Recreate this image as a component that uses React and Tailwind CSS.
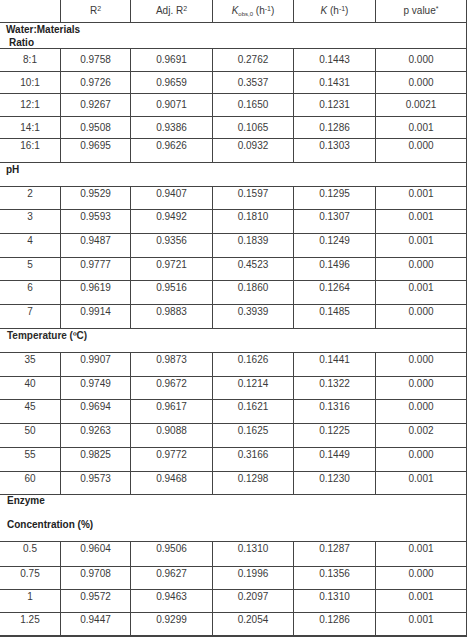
const cols = "grid grid-cols-[61px_70px_82px_81px_82px_91px]";

const groups = [
  {
    label: (
      <div className="pt-[0px] leading-[13px] font-bold text-[#222]">
        <div className="pl-[6px]">Water:Materials</div>
        <div className="pl-[9px]">Ratio</div>
      </div>
    ),
    h: 26,
    rows: [
      { h: 23, mid: true, v: ["8:1", "0.9758", "0.9691", "0.2762", "0.1443", "0.000"] },
      { h: 22, mid: true, v: ["10:1", "0.9726", "0.9659", "0.3537", "0.1431", "0.000"] },
      { h: 23, mid: true, v: ["12:1", "0.9267", "0.9071", "0.1650", "0.1231", "0.0021"] },
      { h: 22, mid: true, v: ["14:1", "0.9508", "0.9386", "0.1065", "0.1286", "0.001"] },
      { h: 24, v: ["16:1", "0.9695", "0.9626", "0.0932", "0.1303", "0.000"] },
    ],
  },
  {
    label: <div className="pl-[6px] pt-[1px] leading-[12px] font-bold text-[#222]">pH</div>,
    h: 24,
    rows: [
      { h: 23, v: ["2", "0.9529", "0.9407", "0.1597", "0.1295", "0.001"] },
      { h: 24, v: ["3", "0.9593", "0.9492", "0.1810", "0.1307", "0.001"] },
      { h: 24, v: ["4", "0.9487", "0.9356", "0.1839", "0.1249", "0.001"] },
      { h: 23, v: ["5", "0.9777", "0.9721", "0.4523", "0.1496", "0.000"] },
      { h: 24, v: ["6", "0.9619", "0.9516", "0.1860", "0.1264", "0.001"] },
      { h: 24, v: ["7", "0.9914", "0.9883", "0.3939", "0.1485", "0.000"] },
    ],
  },
  {
    label: <div className="pl-[7px] pt-[1px] leading-[12px] font-bold text-[#2a2a2a]">Temperature (ºC)</div>,
    h: 24,
    rows: [
      { h: 24, v: ["35", "0.9907", "0.9873", "0.1626", "0.1441", "0.000"] },
      { h: 23, v: ["40", "0.9749", "0.9672", "0.1214", "0.1322", "0.000"] },
      { h: 24, v: ["45", "0.9694", "0.9617", "0.1621", "0.1316", "0.000"] },
      { h: 24, v: ["50", "0.9263", "0.9088", "0.1625", "0.1225", "0.002"] },
      { h: 24, v: ["55", "0.9825", "0.9772", "0.3166", "0.1449", "0.000"] },
      { h: 23, v: ["60", "0.9573", "0.9468", "0.1298", "0.1230", "0.001"] },
    ],
  },
  {
    label: (
      <div className="pl-[7px] pt-[0px] leading-[12px] font-bold text-[#222] flex flex-col gap-[12px]">
        <div>Enzyme</div>
        <div>Concentration (%)</div>
      </div>
    ),
    h: 47,
    rows: [
      { h: 25, v: ["0.5", "0.9604", "0.9506", "0.1310", "0.1287", "0.001"] },
      { h: 23, v: ["0.75", "0.9708", "0.9627", "0.1996", "0.1356", "0.000"] },
      { h: 23, v: ["1", "0.9572", "0.9463", "0.2097", "0.1310", "0.001"] },
      { h: 24, last: true, v: ["1.25", "0.9447", "0.9299", "0.2054", "0.1286", "0.001"] },
    ],
  },
];

function Cell({ children, mid }) {
  return (
    <div
      className={
        "flex justify-center border-r border-[#444] " +
        (mid ? "items-center" : "items-start pt-[1px]")
      }
    >
      <span className="leading-[12px]">{children}</span>
    </div>
  );
}

function DataRow({ row }) {
  return (
    <div
      className={cols + " border-[#444] " + (row.last ? "border-b-2" : "border-b")}
      style={{ height: row.h }}
    >
      {row.v.map((t, i) => (
        <Cell key={i} mid={row.mid}>
          {t}
        </Cell>
      ))}
    </div>
  );
}

const Sup = ({ children }) => <sup className="text-[7px]">{children}</sup>;

export default function App() {
  return (
    <div
      className="w-[474px] h-[639px] bg-white text-[10px] text-[#3a3a3a] overflow-hidden"
      style={{ fontFamily: '"Liberation Sans", Arial, sans-serif' }}
    >
      <div className="w-[467px]">
        <div className={cols + " h-[23px] border-b border-[#444]"}>
          <Cell mid></Cell>
          <Cell mid>
            R<Sup>2</Sup>
          </Cell>
          <Cell mid>
            Adj. R<Sup>2</Sup>
          </Cell>
          <Cell mid>
            <i>K</i>
            <sub className="text-[6px]">obs,0</sub> (h<Sup>-1</Sup>)
          </Cell>
          <Cell mid>
            <i>K</i> (h<Sup>-1</Sup>)
          </Cell>
          <Cell mid>
            p value<Sup>*</Sup>
          </Cell>
        </div>
        {groups.map((g, gi) => (
          <div key={gi}>
            <div className="border-b border-r border-[#444]" style={{ height: g.h }}>
              {g.label}
            </div>
            {g.rows.map((r, ri) => (
              <DataRow key={ri} row={r} />
            ))}
          </div>
        ))}
      </div>
    </div>
  );
}
